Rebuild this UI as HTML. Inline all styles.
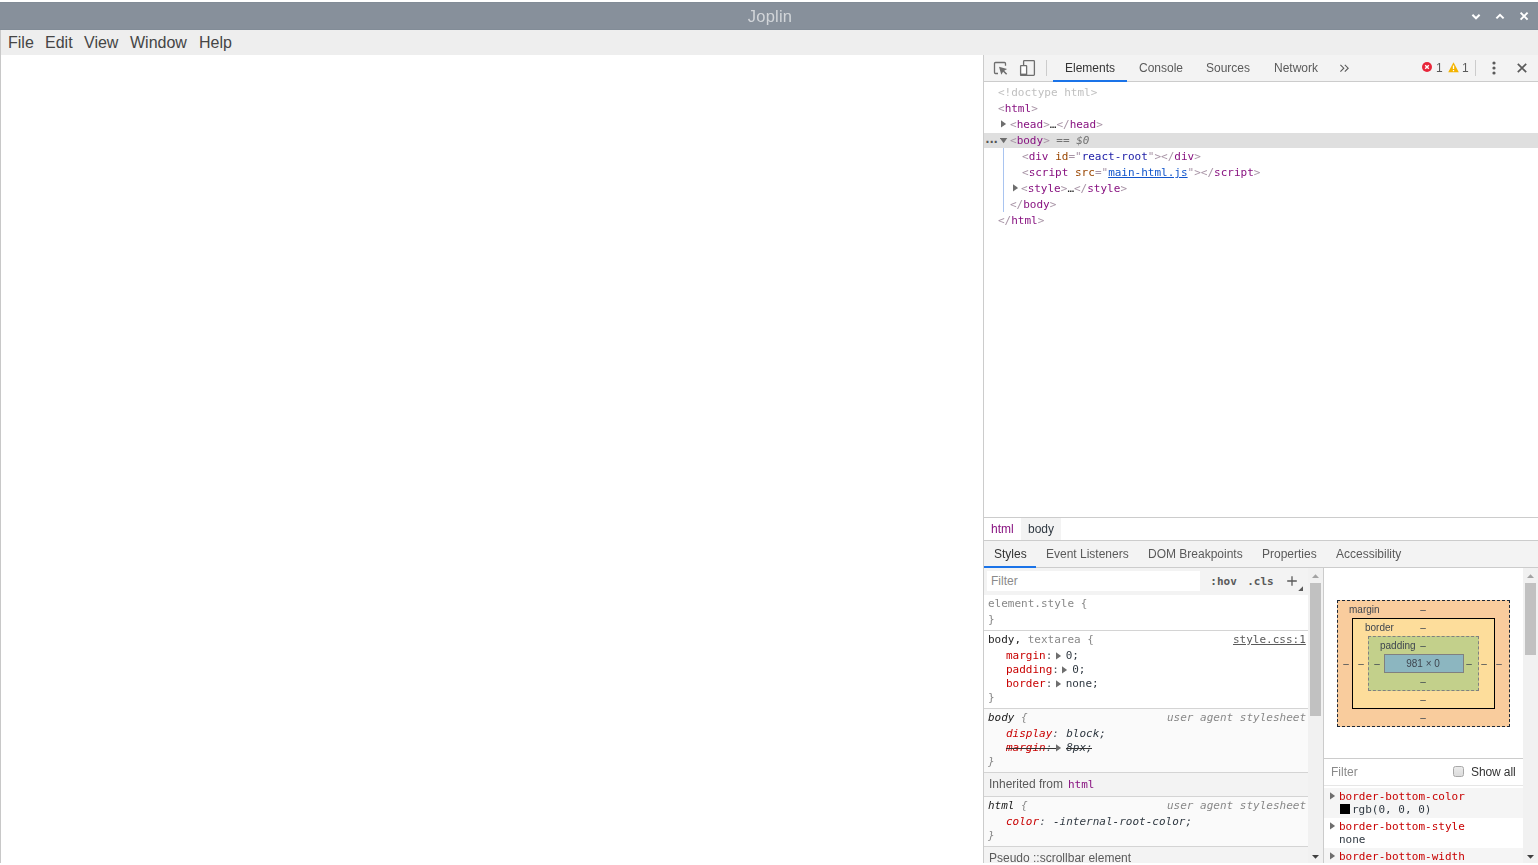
<!DOCTYPE html>
<html>
<head>
<meta charset="utf-8">
<title>Joplin</title>
<style>
*{box-sizing:border-box;margin:0;padding:0}
html,body{width:1538px;height:865px;overflow:hidden;background:#fff}
body{position:relative;font-family:"Liberation Sans",sans-serif;font-size:12px;color:#333}
.abs{position:absolute;white-space:nowrap}
.ui{font-family:"Liberation Sans",sans-serif;font-size:12px;color:#333;line-height:14px}
.mono{font-family:"DejaVu Sans Mono","Liberation Mono",monospace;font-size:11px;line-height:16px}
/* window chrome */
#topline{left:0;top:0;width:1538px;height:2px;background:#fff}
#titlebar{left:0;top:2px;width:1538px;height:28px;background:#87909b;border-top:1px solid #828c97;border-bottom:1px solid #828c97}
#title{left:1px;top:2px;letter-spacing:0.2px;width:1538px;height:28px;line-height:28px;text-align:center;color:#d2d5d9;font-size:16.5px}
#menubar{left:0;top:30px;width:1538px;height:25px;background:#eeeeee}
.menu{top:30px;height:25px;line-height:25px;font-size:16px;color:#454545}
#leftborder{left:0;top:30px;width:1px;height:833px;background:#c8c8c8}
/* devtools */
#dt{left:983px;top:55px;width:555px;height:810px;background:#fff;border-left:1px solid #ccc}
#toolbar{left:984px;top:55px;width:554px;height:27px;background:#f3f3f3;border-bottom:1px solid #ccc}
.tab{top:55px;height:26px;line-height:26px;font-size:12px;color:#333}
.tag{color:#881280}.an{color:#994500}.av{color:#1a1aa6}.gr{color:#a8a8a8}.dc{color:#c0c0c0}
.prop{color:#c80000}.val{color:#222}.sel{color:#222}.dim{color:#888}

.tab{top:55px;height:26px;line-height:26px;font-size:12px;color:#5a5a5a;padding:0 12px}
.tab.on{color:#333}
.b{color:#a894a6}.t{color:#881280}
.row{left:984px;width:554px;height:16px}
.tri-r{width:0;height:0;border-left:6px solid #6e6e6e;border-top:4px solid transparent;border-bottom:4px solid transparent}
.tri-d{width:0;height:0;border-top:6px solid #6e6e6e;border-left:4px solid transparent;border-right:4px solid transparent}

.m{font-family:"DejaVu Sans Mono","Liberation Mono",monospace;font-size:11px;line-height:14px}
.p{color:#c80000}.v{color:#303942}.g{color:#888}.k{color:#222}
.it{font-style:italic}.vi{position:relative;left:0.6px}.c{color:#50555c}
.sep{left:984px;width:324px;height:1px;background:#d4d4d4}
.tr{width:0;height:0;border-left:5px solid #727272;border-top:3.5px solid transparent;border-bottom:3.5px solid transparent}
.bx{font-size:10px;line-height:12px;color:#3f4650;font-family:"Liberation Sans",sans-serif}

.mono,.m,.ui,.tab,.bx,#title{will-change:transform}
.lcd{will-change:auto}
</style>
</head>
<body>
<!-- window chrome -->
<div class="abs" id="topline"></div>
<div class="abs" id="titlebar"></div>
<div class="abs" id="title">Joplin</div>
<svg class="abs" style="left:1468px;top:8px" width="64" height="16" viewBox="0 0 64 16"><g fill="none" stroke="#fff" stroke-width="2"><path d="M4.4 6.7L8 10.3l3.6-3.6"/><path d="M28.4 10.4L32 6.8l3.6 3.6"/><path d="M52.6 4.6l7 7M59.6 4.6l-7 7"/></g></svg>
<div class="abs" id="menubar"></div>
<div class="abs menu" style="left:8px">File</div>
<div class="abs menu" style="left:45px">Edit</div>
<div class="abs menu" style="left:84px">View</div>
<div class="abs menu" style="left:130px">Window</div>
<div class="abs menu" style="left:199px">Help</div>
<div class="abs" id="leftborder"></div>
<!-- devtools -->
<div class="abs" id="dt"></div>
<div class="abs" id="toolbar"></div>

<svg class="abs" style="left:993px;top:61px" width="15" height="15" viewBox="0 0 15 15"><path d="M5 12.5H2.5a1 1 0 0 1-1-1v-9a1 1 0 0 1 1-1h9a1 1 0 0 1 1 1V4.8" fill="none" stroke="#6e6e6e" stroke-width="1.3"/><path d="M6 5.7l2.3 8 1.8-2.9 3 3 1.1-1.1-3-3 2.9-1.8z" fill="#6e6e6e"/></svg>
<svg class="abs" style="left:1019px;top:59px" width="18" height="18" viewBox="0 0 18 18"><rect x="4.6" y="1.6" width="10.8" height="14.8" rx="0.8" fill="none" stroke="#6e6e6e" stroke-width="1.3"/><rect x="1.6" y="6.6" width="6" height="9.8" rx="0.5" fill="#fff" stroke="#6e6e6e" stroke-width="1.3"/><rect x="1.6" y="14.6" width="6" height="1.8" fill="#6e6e6e"/></svg>
<div class="abs" style="left:1046px;top:60px;width:1px;height:16px;background:#ccc"></div>
<div class="abs tab on" style="left:1053px">Elements</div>
<div class="abs" style="left:1053px;top:80px;width:74px;height:2px;background:#1a73e8"></div>
<div class="abs tab" style="left:1127px">Console</div>
<div class="abs tab" style="left:1194px">Sources</div>
<div class="abs tab" style="left:1262px">Network</div>
<svg class="abs" style="left:1339px;top:63px" width="11" height="10" viewBox="0 0 11 10"><path d="M1.4 1.8l3.4 3.4-3.4 3.4M5.8 1.8l3.4 3.4-3.4 3.4" fill="none" stroke="#5a5a5a" stroke-width="1.1"/></svg>
<svg class="abs" style="left:1422px;top:62px" width="10" height="10" viewBox="0 0 10 10"><circle cx="5" cy="5" r="5" fill="#e8263a"/><path d="M3.2 3.2l3.6 3.6M6.8 3.2L3.2 6.8" stroke="#fff" stroke-width="1.4"/></svg>
<div class="abs ui" style="left:1436px;top:61px;color:#5a5a5a">1</div>
<svg class="abs" style="left:1447.6px;top:61.6px" width="11" height="11" viewBox="0 0 11 11"><path d="M5.5 0.3L10.8 10.2H0.2z" fill="#f4b400"/><path d="M5.5 3.6v3.4M5.5 8v1.2" stroke="#fff" stroke-width="1.3"/></svg>
<div class="abs ui" style="left:1462px;top:61px;color:#5a5a5a">1</div>
<div class="abs" style="left:1475px;top:60px;width:1px;height:16px;background:#ccc"></div>
<svg class="abs" style="left:1492px;top:61px" width="4" height="14" viewBox="0 0 4 14"><circle cx="2" cy="2" r="1.6" fill="#5a5a5a"/><circle cx="2" cy="7" r="1.6" fill="#5a5a5a"/><circle cx="2" cy="12" r="1.6" fill="#5a5a5a"/></svg>
<svg class="abs" style="left:1517px;top:63px" width="10" height="10" viewBox="0 0 10 10"><path d="M0.8 0.8l8.4 8.4M9.2 0.8L0.8 9.2" stroke="#5a5a5a" stroke-width="1.7"/></svg>


<div class="abs" style="left:984px;top:133px;width:554px;height:15px;background:#dfdfdf"></div>
<div class="abs" style="left:1003px;top:148px;width:1px;height:64px;background:#a9c4f0"></div>
<div class="abs mono" style="left:998px;top:85px;color:#c0c0c0">&lt;!doctype html&gt;</div>
<div class="abs mono" style="left:998px;top:101px"><span class="b">&lt;</span><span class="t">html</span><span class="b">&gt;</span></div>
<svg class="abs" style="left:1001px;top:120px" width="6" height="8" viewBox="0 0 6 8"><path d="M0 0.2v7.4L5.1 3.9z" fill="#6e6e6e"/></svg>
<div class="abs mono" style="left:1010px;top:117px"><span class="b">&lt;</span><span class="t">head</span><span class="b">&gt;</span><span style="color:#222">…</span><span class="b">&lt;/</span><span class="t">head</span><span class="b">&gt;</span></div>
<div class="abs" style="left:985.6px;top:130px;font-family:'Liberation Sans',sans-serif;font-weight:bold;font-size:14px;line-height:16px;color:#555;letter-spacing:0.2px">...</div>
<svg class="abs" style="left:1000px;top:138px" width="8" height="6" viewBox="0 0 8 6"><path d="M-0.1 0h7.4L3.6 5.2z" fill="#6e6e6e"/></svg>
<div class="abs mono" style="left:1010px;top:133px"><span class="b">&lt;</span><span class="t">body</span><span class="b">&gt;</span><span style="color:#737373;font-style:italic"> == $0</span></div>
<div class="abs mono" style="left:1022px;top:149px"><span class="b">&lt;</span><span class="t">div</span> <span class="an">id</span><span class="b">="</span><span class="av">react-root</span><span class="b">"&gt;&lt;/</span><span class="t">div</span><span class="b">&gt;</span></div>
<div class="abs mono" style="left:1022px;top:165px"><span class="b">&lt;</span><span class="t">script</span> <span class="an">src</span><span class="b">="</span><span style="color:#1155cc;text-decoration:underline">main-html.js</span><span class="b">"&gt;&lt;/</span><span class="t">script</span><span class="b">&gt;</span></div>
<svg class="abs" style="left:1013px;top:184px" width="6" height="8" viewBox="0 0 6 8"><path d="M0 0.2v7.4L5.1 3.9z" fill="#6e6e6e"/></svg>
<div class="abs mono" style="left:1021.2px;top:181px"><span class="b">&lt;</span><span class="t">style</span><span class="b">&gt;</span><span style="color:#222">…</span><span class="b">&lt;/</span><span class="t">style</span><span class="b">&gt;</span></div>
<div class="abs mono" style="left:1010px;top:197px"><span class="b">&lt;/</span><span class="t">body</span><span class="b">&gt;</span></div>
<div class="abs mono" style="left:998px;top:213px"><span class="b">&lt;/</span><span class="t">html</span><span class="b">&gt;</span></div>


<div class="abs" style="left:984px;top:517px;width:554px;height:1px;background:#ccc"></div>
<div class="abs" style="left:1021px;top:518px;width:40px;height:22px;background:#f3f3f3"></div>
<div class="abs ui" style="left:991px;top:522px;color:#881280">html</div>
<div class="abs ui" style="left:1028px;top:522px;color:#303942">body</div>
<div class="abs" style="left:984px;top:540px;width:554px;height:28px;background:#f3f3f3;border-top:1px solid #ccc;border-bottom:1px solid #ccc"></div>
<div class="abs ui" style="left:993.5px;top:547px">Styles</div>
<div class="abs" style="left:984px;top:566px;width:52px;height:2px;background:#1a73e8"></div>
<div class="abs ui" style="left:1045.5px;top:547px;color:#5a5a5a">Event Listeners</div>
<div class="abs ui" style="left:1147.5px;top:547px;color:#5a5a5a">DOM Breakpoints</div>
<div class="abs ui" style="left:1261.5px;top:547px;color:#5a5a5a">Properties</div>
<div class="abs ui" style="left:1336px;top:547px;color:#5a5a5a">Accessibility</div>


<div class="abs" style="left:984px;top:568px;width:324px;height:27px;background:#f3f3f3"></div>
<div class="abs" style="left:987px;top:571px;width:213px;height:20px;background:#fff"></div>
<div class="abs ui lcd" style="left:991px;top:574px;color:#8a8a8a">Filter</div>
<div class="abs m lcd" style="left:1210.3px;top:575px;font-weight:bold;color:#5a5a5a">:hov</div>
<div class="abs m lcd" style="left:1247.2px;top:575px;font-weight:bold;color:#5a5a5a">.cls</div>
<svg class="abs" style="left:1286px;top:575px" width="18" height="17" viewBox="0 0 18 17"><path d="M6 1.2v9.6M1.2 6h9.6" stroke="#5a5a5a" stroke-width="1.3"/><path d="M17 11.2v4.8h-4.8z" fill="#5a5a5a"/></svg>
<!-- styles sections backgrounds -->
<div class="abs" style="left:984px;top:709px;width:324px;height:63px;background:#fafafa"></div>
<div class="abs" style="left:984px;top:773px;width:324px;height:23px;background:#f3f3f3"></div>
<div class="abs" style="left:984px;top:797px;width:324px;height:49px;background:#fafafa"></div>
<div class="abs" style="left:984px;top:847px;width:324px;height:18px;background:#f3f3f3"></div>
<div class="abs sep" style="top:630px"></div>
<div class="abs sep" style="top:708px"></div>
<div class="abs sep" style="top:772px"></div>
<div class="abs sep" style="top:796px"></div>
<div class="abs sep" style="top:846px"></div>
<!-- element.style -->
<div class="abs m g" style="left:988px;top:597px">element.style {</div>
<div class="abs m g" style="left:988px;top:613px">}</div>
<!-- body, textarea -->
<div class="abs m" style="left:988px;top:633px"><span class="k">body,</span><span class="g"> textarea {</span></div>
<div class="abs m g" style="left:1233px;top:633px;color:#5a5a5a;text-decoration:underline">style.css:1</div>
<div class="abs m" style="left:1006px;top:649px"><span class="p">margin</span><span class="c">:</span>&nbsp;&nbsp;<span class="v">0;</span></div>
<svg class="abs" style="left:1056px;top:652px" width="6" height="8" viewBox="0 0 6 8"><path d="M0 0.2v7.4L5.1 3.9z" fill="#6e6e6e"/></svg>
<div class="abs m" style="left:1006px;top:663px"><span class="p">padding</span><span class="c">:</span>&nbsp;&nbsp;<span class="v">0;</span></div>
<svg class="abs" style="left:1062px;top:666px" width="6" height="8" viewBox="0 0 6 8"><path d="M0 0.2v7.4L5.1 3.9z" fill="#6e6e6e"/></svg>
<div class="abs m" style="left:1006px;top:677px"><span class="p">border</span><span class="c">:</span>&nbsp;&nbsp;<span class="v">none;</span></div>
<svg class="abs" style="left:1056px;top:680px" width="6" height="8" viewBox="0 0 6 8"><path d="M0 0.2v7.4L5.1 3.9z" fill="#6e6e6e"/></svg>
<div class="abs m g" style="left:988px;top:691px">}</div>
<!-- body UA -->
<div class="abs m it" style="left:988px;top:711px"><span class="k">body</span><span class="g"> {</span></div>
<div class="abs m it g" style="left:1167px;top:711px">user agent stylesheet</div>
<div class="abs m it" style="left:1006px;top:727px"><span class="p">display</span><span class="c">:</span> <span class="v vi">block;</span></div>
<div class="abs m it" style="left:1006px;top:741px"><span class="p">margin</span><span class="c">:</span>&nbsp;&nbsp;<span class="v vi">8px;</span></div>
<svg class="abs" style="left:1056px;top:744px" width="6" height="8" viewBox="0 0 6 8"><path d="M0 0.2v7.4L5.1 3.9z" fill="#6e6e6e"/></svg>
<div class="abs" style="left:1006px;top:748px;width:50px;height:1px;background:#333"></div><div class="abs" style="left:1066px;top:748px;width:26px;height:1px;background:#333"></div>
<div class="abs m it g" style="left:988px;top:755px">}</div>
<!-- inherited -->
<div class="abs ui" style="left:989px;top:777px;color:#5a5a5a">Inherited from</div>
<div class="abs m" style="left:1068.3px;top:778px;color:#881280">html</div>
<!-- html UA -->
<div class="abs m it" style="left:988px;top:799px"><span class="k">html</span><span class="g"> {</span></div>
<div class="abs m it g" style="left:1167px;top:799px">user agent stylesheet</div>
<div class="abs m it" style="left:1006px;top:815px"><span class="p">color</span><span class="c">:</span> <span class="v vi">-internal-root-color;</span></div>
<div class="abs m it g" style="left:988px;top:829px">}</div>
<div class="abs ui" style="left:989px;top:851px;color:#5a5a5a">Pseudo ::scrollbar element</div>
<!-- styles scrollbar -->
<div class="abs" style="left:1308px;top:568px;width:15px;height:297px;background:#f1f1f1"></div>
<div class="abs" style="left:1310px;top:583px;width:11px;height:133px;background:#c1c1c1"></div>
<svg class="abs" style="left:1312px;top:574px" width="7" height="4" viewBox="0 0 7 4"><path d="M0 4L3.5 0.3 7 4z" fill="#a3a3a3"/></svg>
<svg class="abs" style="left:1312px;top:855px" width="7" height="4" viewBox="0 0 7 4"><path d="M0 0L3.5 3.8 7 0z" fill="#404040"/></svg>
<div class="abs" style="left:1323px;top:568px;width:1px;height:297px;background:#ccc"></div>


<!-- box model -->
<div class="abs" style="left:1337px;top:600px;width:173px;height:127px;background:#f9cc9d;border:1px dashed #1c2838"></div>
<div class="abs" style="left:1352px;top:618px;width:143px;height:91px;background:#fddd9b;border:1px solid #000"></div>
<div class="abs" style="left:1368px;top:636px;width:111px;height:55px;background:#c3d08b;border:1px dashed #808080"></div>
<div class="abs" style="left:1384px;top:654px;width:80px;height:19px;background:#8cb6c0;border:1px solid #808080"></div>
<div class="abs bx" style="left:1349.2px;top:604px">margin</div>
<div class="abs bx" style="left:1365.2px;top:622px">border</div>
<div class="abs bx" style="left:1380px;top:640px">padding</div>
<div class="abs bx" style="left:1383.4px;top:658px;width:80px;text-align:center">981 × 0</div>
<div class="abs bx" style="left:1413.4px;top:604px;width:20px;text-align:center">‒</div>
<div class="abs bx" style="left:1413.4px;top:622px;width:20px;text-align:center">‒</div>
<div class="abs bx" style="left:1413.4px;top:640px;width:20px;text-align:center">‒</div>
<div class="abs bx" style="left:1413.4px;top:676px;width:20px;text-align:center">‒</div>
<div class="abs bx" style="left:1413.4px;top:694px;width:20px;text-align:center">‒</div>
<div class="abs bx" style="left:1413.4px;top:712px;width:20px;text-align:center">‒</div>
<div class="abs bx" style="left:1336.4px;top:658px;width:20px;text-align:center">‒</div>
<div class="abs bx" style="left:1351.4px;top:658px;width:20px;text-align:center">‒</div>
<div class="abs bx" style="left:1367.4px;top:658px;width:20px;text-align:center">‒</div>
<div class="abs bx" style="left:1459.4px;top:658px;width:20px;text-align:center">‒</div>
<div class="abs bx" style="left:1474.4px;top:658px;width:20px;text-align:center">‒</div>
<div class="abs bx" style="left:1489.4px;top:658px;width:20px;text-align:center">‒</div>
<!-- computed filter -->
<div class="abs" style="left:1324px;top:758px;width:199px;height:1px;background:#ccc"></div>
<div class="abs ui lcd" style="left:1331px;top:765px;color:#8a8a8a">Filter</div>
<div class="abs" style="left:1453px;top:766px;width:11px;height:11px;border:1px solid #a8a8a8;border-radius:2.5px;background:linear-gradient(#ebebeb,#dcdcdc)"></div>
<div class="abs ui" style="left:1471px;top:765px;letter-spacing:-0.1px">Show all</div>
<div class="abs" style="left:1324px;top:785px;width:199px;height:1px;background:#e6e6e6"></div>
<div class="abs" style="left:1324px;top:788px;width:199px;height:30px;background:#f5f5f5"></div>
<div class="abs" style="left:1324px;top:848px;width:199px;height:17px;background:#f5f5f5"></div>
<svg class="abs" style="left:1330px;top:792px" width="6" height="8" viewBox="0 0 6 8"><path d="M0 0.2v7.4L5.1 3.9z" fill="#6e6e6e"/></svg>
<div class="abs m p" style="left:1339px;top:790px">border-bottom-color</div>
<div class="abs" style="left:1340px;top:804px;width:10px;height:10px;background:#000"></div>
<div class="abs m v" style="left:1352.4px;top:803px">rgb(0, 0, 0)</div>
<svg class="abs" style="left:1330px;top:822px" width="6" height="8" viewBox="0 0 6 8"><path d="M0 0.2v7.4L5.1 3.9z" fill="#6e6e6e"/></svg>
<div class="abs m p" style="left:1339px;top:820px">border-bottom-style</div>
<div class="abs m v" style="left:1339px;top:833px">none</div>
<svg class="abs" style="left:1330px;top:852px" width="6" height="8" viewBox="0 0 6 8"><path d="M0 0.2v7.4L5.1 3.9z" fill="#6e6e6e"/></svg>
<div class="abs m p" style="left:1339px;top:850px">border-bottom-width</div>
<!-- right scrollbar -->
<div class="abs" style="left:1523px;top:568px;width:15px;height:297px;background:#f1f1f1"></div>
<div class="abs" style="left:1525px;top:583px;width:11px;height:72px;background:#c1c1c1"></div>
<svg class="abs" style="left:1527px;top:574px" width="7" height="4" viewBox="0 0 7 4"><path d="M0 4L3.5 0.3 7 4z" fill="#a3a3a3"/></svg>
<svg class="abs" style="left:1527px;top:855px" width="7" height="4" viewBox="0 0 7 4"><path d="M0 0L3.5 3.8 7 0z" fill="#404040"/></svg>

<div class="abs" style="left:0;top:863px;width:1538px;height:2px;background:#fff;z-index:50"></div>
</body>
</html>
